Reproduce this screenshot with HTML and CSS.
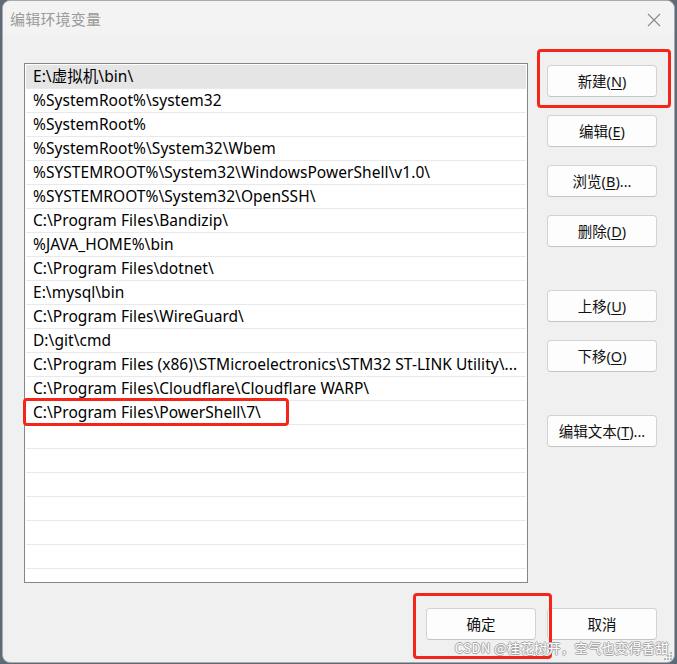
FILE: index.html
```html
<!DOCTYPE html>
<html lang="zh-CN">
<head>
<meta charset="utf-8">
<title>编辑环境变量</title>
<link rel="stylesheet" href="styles.css">
</head>
<body>
<div class="window">
  <div class="titlebar">
    <span class="title">编辑环境变量</span>
    <svg class="close" width="14" height="14" viewBox="0 0 14 14"><path d="M1 1L13 13M13 1L1 13" stroke="#8a8a8a" stroke-width="1.1" fill="none"/></svg>
  </div>
  <div class="main">
    <div class="list">
      <div class="row selected">E:\虚拟机\bin\</div>
      <div class="row">%SystemRoot%\system32</div>
      <div class="row">%SystemRoot%</div>
      <div class="row">%SystemRoot%\System32\Wbem</div>
      <div class="row">%SYSTEMROOT%\System32\WindowsPowerShell\v1.0\</div>
      <div class="row">%SYSTEMROOT%\System32\OpenSSH\</div>
      <div class="row">C:\Program Files\Bandizip\</div>
      <div class="row">%JAVA_HOME%\bin</div>
      <div class="row">C:\Program Files\dotnet\</div>
      <div class="row">E:\mysql\bin</div>
      <div class="row">C:\Program Files\WireGuard\</div>
      <div class="row">D:\git\cmd</div>
      <div class="row">C:\Program Files (x86)\STMicroelectronics\STM32 ST-LINK Utility\...</div>
      <div class="row">C:\Program Files\Cloudflare\Cloudflare WARP\</div>
      <div class="row">C:\Program Files\PowerShell\7\</div>
      <div class="row"></div>
      <div class="row"></div>
      <div class="row"></div>
      <div class="row"></div>
      <div class="row"></div>
      <div class="row"></div>
      <div class="row"></div>
    </div>
    <div class="side">
      <div class="group">
        <button class="btn">新建(<u>N</u>)</button>
        <button class="btn">编辑(<u>E</u>)</button>
        <button class="btn">浏览(<u>B</u>)...</button>
        <button class="btn">删除(<u>D</u>)</button>
      </div>
      <div class="group">
        <button class="btn">上移(<u>U</u>)</button>
        <button class="btn">下移(<u>O</u>)</button>
      </div>
      <div class="group">
        <button class="btn">编辑文本(<u>T</u>)...</button>
      </div>
    </div>
  </div>
  <div class="footer">
    <button class="btn">确定</button>
    <button class="btn">取消</button>
  </div>
  <div class="mark mark-new"></div>
  <div class="mark mark-row"></div>
  <div class="mark mark-ok"></div>
  <div class="watermark">CSDN @桂花树开，空气也变得香甜</div>
  <svg class="grip" width="8" height="8" viewBox="0 0 8 8"><g fill="#b8b8b8"><rect x="6" y="0" width="2" height="2"/><rect x="3" y="3" width="2" height="2"/><rect x="6" y="3" width="2" height="2"/><rect x="0" y="6" width="2" height="2"/><rect x="3" y="6" width="2" height="2"/><rect x="6" y="6" width="2" height="2"/></g></svg>
</div>
</body>
</html>
```
FILE: styles.css
```css
html, body {
  margin: 0;
  padding: 0;
}
body {
  width: 677px;
  height: 664px;
  background: #5d6a78;
  font-family: "Noto Sans", "Noto Sans CJK SC", sans-serif;
  overflow: hidden;
}
.window {
  position: relative;
  margin-left: 2px;
  width: 671px;
  height: 661px;
  background: #f0f0f0;
  border: 1px solid #a9a9a9;
  border-radius: 8px;
  display: flex;
  flex-direction: column;
}
.titlebar {
  height: 39px;
  display: flex;
  align-items: center;
  justify-content: space-between;
  padding: 0 13px 5px 7px;
  background: linear-gradient(#f3f3f3 0, #f3f3f3 30px, #f0f0f0 39px);
  border-radius: 8px 8px 0 0;
  box-sizing: border-box;
}
.title {
  font-family: "Noto Sans CJK SC", sans-serif;
  font-size: 15px;
  color: #9a9a9a;
  letter-spacing: 0.2px;
}
.close {
  display: block;
  margin-top: 3px;
}
.main {
  display: flex;
  padding: 23px 0 0 21px;
}
.list {
  width: 504px;
  height: 520px;
  box-sizing: border-box;
  background: #fff;
  border: 1px solid #858590;
  padding: 1px 1px 0 1px;
  overflow: hidden;
}
.row {
  height: 24px;
  box-sizing: border-box;
  border-bottom: 1px solid #e9e9e9;
  padding: 0 2px 0 7px;
  font-size: 15.5px;
  letter-spacing: 0.05px;
  line-height: 23px;
  color: #000;
  white-space: nowrap;
  overflow: hidden;
}
.row.selected {
  background: #e5e5e5;
}
.side {
  margin-left: 19px;
  padding-top: 2px;
  display: flex;
  flex-direction: column;
  gap: 43px;
}
.group {
  display: flex;
  flex-direction: column;
  gap: 18px;
}
.btn {
  width: 110px;
  height: 32px;
  margin: 0;
  padding: 0;
  background: #fdfdfd;
  border: 1px solid #d3d3d3;
  border-bottom-color: #c4c4c4;
  border-radius: 4px;
  font-family: "Noto Sans", "Noto Sans CJK SC", sans-serif;
  font-size: 14.5px;
  color: #111;
  line-height: 30px;
}
.btn u {
  text-underline-offset: 2px;
}
.footer {
  display: flex;
  justify-content: flex-end;
  gap: 11px;
  padding: 25px 17px 0 0;
}
.mark {
  position: absolute;
  border: 3px solid #f4261c;
  border-radius: 4px;
  box-sizing: border-box;
}
.mark-new {
  left: 534px;
  top: 48px;
  width: 134px;
  height: 59px;
}
.mark-row {
  left: 20px;
  top: 397px;
  width: 266px;
  height: 28px;
}
.mark-ok {
  left: 410px;
  top: 592px;
  width: 139px;
  height: 66px;
}
.watermark {
  position: absolute;
  right: 5px;
  bottom: 5px;
  font-family: "Noto Sans CJK SC", sans-serif;
  font-size: 13px;
  color: #ffffff;
  text-shadow: 1px 0 0 #a8a8a8, -1px 0 0 #a8a8a8, 0 1px 0 #a8a8a8, 0 -1px 0 #a8a8a8;
  letter-spacing: 0.5px;
}
.grip {
  position: absolute;
  right: 2px;
  bottom: 2px;
}
```
